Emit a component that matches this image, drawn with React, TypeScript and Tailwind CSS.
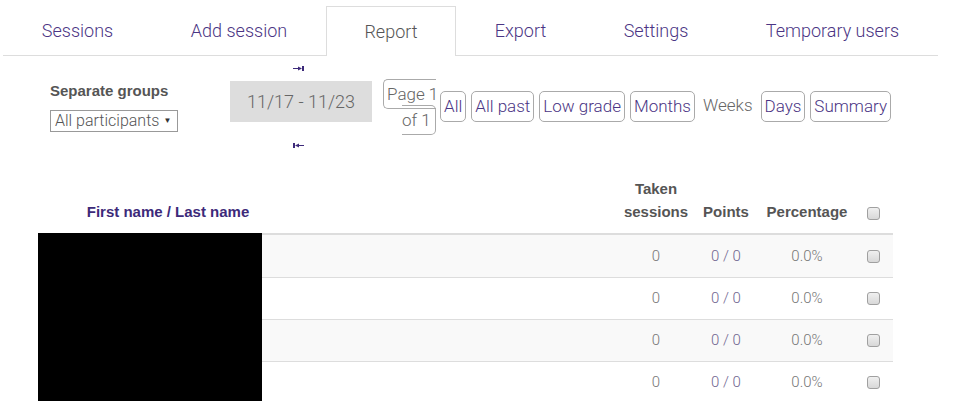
import React from 'react';

const tabs = [
    { label: 'Sessions', width: 'w-[149px]' },
    { label: 'Add session', width: 'w-[174px]' },
    { label: 'Report', width: 'w-[130px]', active: true },
    { label: 'Export', width: 'w-[129px]' },
    { label: 'Settings', width: 'w-[142px]' },
    { label: 'Temporary users', width: 'w-[211px]' },
];

const views = ['All', 'All past', 'Low grade', 'Months', 'Weeks', 'Days', 'Summary'];

function Checkbox() {
    return (
        <span className="inline-block w-[13px] h-[13px] rounded-[3px] border border-[#a0a0a0] bg-gradient-to-b from-[#f0f0f0] to-[#d8d8d8]" />
    );
}

// next-page style arrow: line, head, bar
function ArrowRightBar() {
    return (
        <svg width="11" height="5" viewBox="0 0 11 5" className="block">
            <rect x="0" y="2" width="6" height="1" fill="#3d2a7a" />
            <polygon points="5,0.5 9,2.5 5,4.5" fill="#3d2a7a" />
            <rect x="9" y="0" width="2" height="5" fill="#3d2a7a" />
        </svg>
    );
}

function ArrowLeftBar() {
    return (
        <svg width="11" height="5" viewBox="0 0 11 5" className="block">
            <rect x="0" y="0" width="2" height="5" fill="#3d2a7a" />
            <polygon points="6,0.5 2,2.5 6,4.5" fill="#3d2a7a" />
            <rect x="5" y="2" width="6" height="1" fill="#3d2a7a" />
        </svg>
    );
}

const rows = [0, 1, 2, 3];

export default function App() {
    return (
        <div className="w-[975px] h-[401px] bg-white overflow-hidden font-['Roboto',sans-serif]">
            {/* Tabs */}
            <div className="pl-[3px] pt-[6px]">
                <div className="flex w-[935px] border-b border-[#ddd]">
                    {tabs.map((tab) => (
                        <div
                            key={tab.label}
                            className={`${tab.width} h-[49px] flex items-center justify-center text-[18px] font-light ${tab.active
                                ? 'bg-white border border-b-0 border-[#ddd] text-[#555] -mb-px h-[50px]'
                                : 'text-[#4b3584]'
                                }`}
                        >
                            {tab.label}
                        </div>
                    ))}
                </div>
            </div>

            {/* Toolbar */}
            <div className="flex items-start h-[114px]">
                <div className="ml-[50px] w-[180px] mt-[26px]">
                    <div className="font-['Liberation_Sans',sans-serif] font-bold text-[15px] leading-[17px] text-[#555]">
                        Separate groups
                    </div>
                    <div className="mt-[11px] w-[128px] h-[22px] border border-[#999] flex items-center pl-[4px] text-[16px] font-light text-[#555]">
                        <span>All participants</span>
                        <span className="ml-[4px] text-[8px] text-[#333]">▼</span>
                    </div>
                </div>

                <div className="w-[142px] mt-[10px]">
                    <div className="ml-[63px]">
                        <ArrowRightBar />
                    </div>
                    <div className="mt-[10px] h-[41px] bg-[#ddd] flex items-center justify-center text-[18px] font-light text-[#666]">
                        11/17 - 11/23
                    </div>
                    <div className="mt-[21px] ml-[63px]">
                        <ArrowLeftBar />
                    </div>
                </div>

                <div className="ml-[11px] mt-[23px] flex flex-col items-end w-[53px] text-[17px] font-light text-[#666]">
                    <div className="w-[53px] h-[30px] border-l border-y border-[#aaa] rounded-l-[5px] pl-[3px] leading-[28px] whitespace-nowrap">
                        Page 1
                    </div>
                    <div className="-mt-[4px] w-[34px] h-[30px] border-r border-y border-[#aaa] rounded-r-[5px] leading-[28px] whitespace-nowrap">
                        of 1
                    </div>
                </div>

                <div className="ml-[4px] mt-[35px] flex items-center gap-[5px] text-[17px] font-light">
                    {views.map((v) =>
                        v === 'Weeks' ? (
                            <span key={v} className="px-[3px] h-[31px] leading-[29px] text-[#666]">
                                {v}
                            </span>
                        ) : (
                            <span
                                key={v}
                                className="px-[3px] h-[31px] leading-[29px] border border-[#aaa] rounded-[5px] text-[#4b3584]"
                            >
                                {v}
                            </span>
                        )
                    )}
                </div>
            </div>

            {/* Table */}
            <div className="relative ml-[38px] w-[855px]">
                <div className="grid grid-cols-[260px_322px_72px_68px_94px_39px] h-[65px] items-end pb-[10px] border-b-2 border-[#ddd] font-['Liberation_Sans',sans-serif] font-bold text-[15px] leading-[23px] text-[#555] text-center">
                    <div className="text-[#3d2a7a]">First name / Last name</div>
                    <div />
                    <div>
                        Taken
                        <br />
                        sessions
                    </div>
                    <div>Points</div>
                    <div>Percentage</div>
                    <div className="flex justify-center pb-[3px]">
                        <Checkbox />
                    </div>
                </div>

                {rows.map((r) => (
                    <div
                        key={r}
                        className={`grid grid-cols-[260px_322px_72px_68px_94px_39px] items-center text-center text-[15px] font-light text-[#777] ${r === 0 ? 'h-[42px]' : 'h-[42px] border-t border-[#ddd]'
                            } ${r % 2 === 0 ? 'bg-[#f9f9f9]' : 'bg-white'}`}
                    >
                        <div />
                        <div />
                        <div>0</div>
                        <div className="text-[#706690]">0 / 0</div>
                        <div>0.0%</div>
                        <div className="flex justify-center">
                            <Checkbox />
                        </div>
                    </div>
                ))}

                {/* redacted names */}
                <div className="absolute left-0 top-[63px] w-[224px] h-[200px] bg-black" />
            </div>
        </div>
    );
}
